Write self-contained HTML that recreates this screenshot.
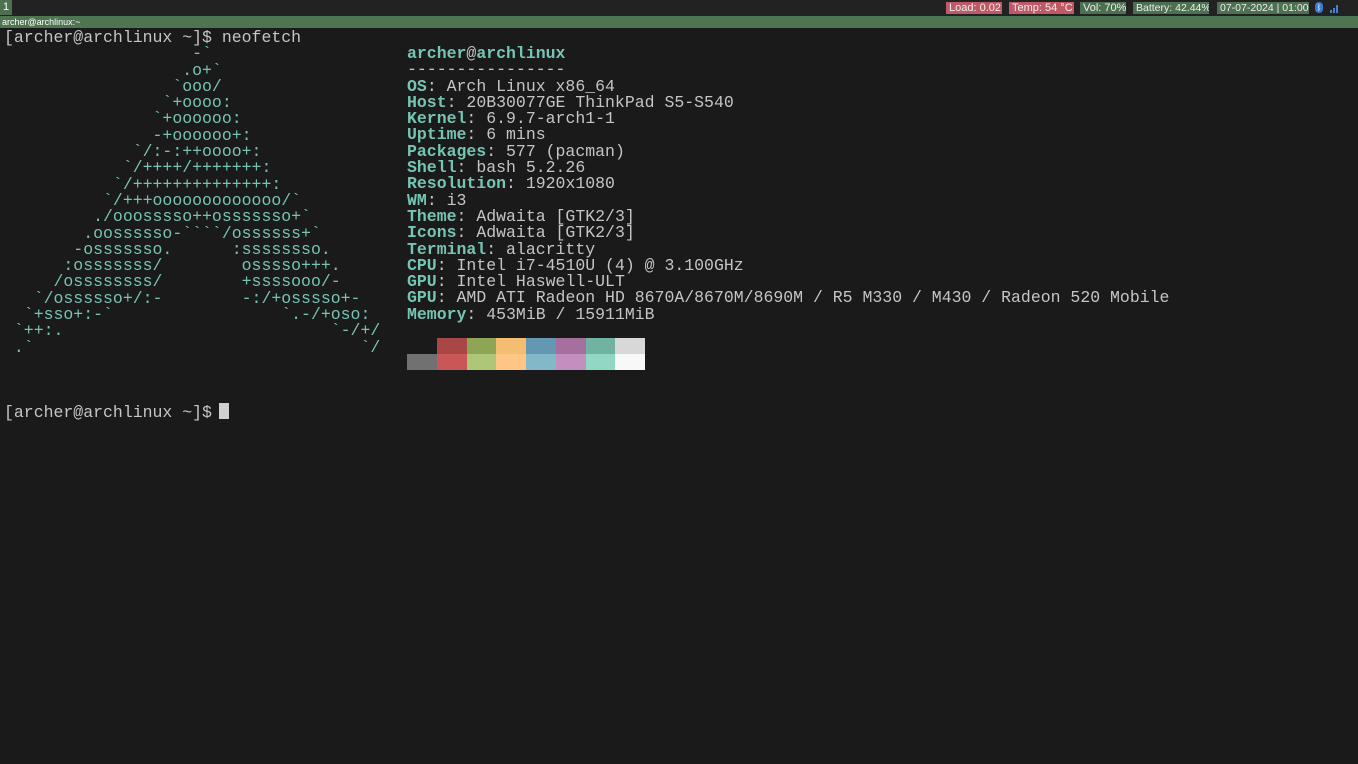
<!DOCTYPE html>
<html><head><meta charset="utf-8"><style>
html,body{margin:0;padding:0;background:#1a1a1a;width:1358px;height:764px;overflow:hidden;font-family:"Liberation Sans",sans-serif}
#top{position:absolute;left:0;top:0;width:1358px;height:16px;background:#222}
#ws{position:absolute;left:0;top:0;width:12px;height:15px;background:#4c7050;color:#fff;font-size:11px;line-height:15px;text-align:center}
.st{position:absolute;top:2px;height:12px;font-size:11px;line-height:12px;color:#f0f0f0;padding:0 3px;box-sizing:border-box;white-space:nowrap;overflow:hidden}
.r{background:#c05966}.g{background:#4c7050}
#title{position:absolute;left:0;top:16px;width:1358px;height:12px;background:#4f7452;color:#fff;font-size:9px;line-height:12px;padding-left:2px}
pre{margin:0;position:absolute;font-family:"Liberation Mono",monospace;font-size:16.5px;line-height:16.3px;color:#c5c5c5}
.c{color:#76c4b4}.b{color:#76c4b4;font-weight:bold}
.blk{position:absolute;width:29.7px;height:16px}
</style></head><body>
<div id="top"><div id="ws">1</div>
<div class="st r" style="left:946px;width:56px">Load: 0.02</div>
<div class="st r" style="left:1009px;width:65px">Temp: 54 °C</div>
<div class="st g" style="left:1080px;width:46px">Vol: 70%</div>
<div class="st g" style="left:1133px;width:76px;font-size:10.5px">Battery: 42.44%</div>
<div class="st g" style="left:1217px;width:92px;font-size:10.5px">07-07-2024 | 01:00</div>
<div style="position:absolute;left:1315px;top:2px;width:8px;height:11px;border-radius:4px;background:#3a7bd5;color:#fff;font-size:8px;line-height:11px;text-align:center">ᛒ</div>
<svg style="position:absolute;left:1330px;top:3px" width="10" height="10"><rect x="0" y="7" width="2" height="3" fill="#4a7fd0"/><rect x="3" y="5" width="2" height="5" fill="#4a7fd0"/><rect x="6" y="2" width="2" height="8" fill="#4a7fd0"/></svg>
</div>
<div id="title">archer@archlinux:~</div>
<pre style="left:4px;top:30px">[archer@archlinux ~]$ neofetch
<span class="c">                   -&#96;
                  .o+&#96;
                 &#96;ooo/
                &#96;+oooo:
               &#96;+oooooo:
               -+oooooo+:
             &#96;/:-:++oooo+:
            &#96;/++++/+++++++:
           &#96;/++++++++++++++:
          &#96;/+++ooooooooooooo/&#96;
         ./ooosssso++osssssso+&#96;
        .oossssso-&#96;&#96;&#96;&#96;/ossssss+&#96;
       -osssssso.      :ssssssso.
      :osssssss/        osssso+++.
     /ossssssss/        +ssssooo/-
   &#96;/ossssso+/:-        -:/+osssso+-
  &#96;+sso+:-&#96;                 &#96;.-/+oso:
 &#96;++:.                           &#96;-/+/
 .&#96;                                 &#96;/</span>



[archer@archlinux ~]$ </pre>
<pre style="left:407px;top:46px"><span class="b">archer</span>@<span class="b">archlinux</span>
----------------
<span class="b">OS</span>: Arch Linux x86_64
<span class="b">Host</span>: 20B30077GE ThinkPad S5-S540
<span class="b">Kernel</span>: 6.9.7-arch1-1
<span class="b">Uptime</span>: 6 mins
<span class="b">Packages</span>: 577 (pacman)
<span class="b">Shell</span>: bash 5.2.26
<span class="b">Resolution</span>: 1920x1080
<span class="b">WM</span>: i3
<span class="b">Theme</span>: Adwaita [GTK2/3]
<span class="b">Icons</span>: Adwaita [GTK2/3]
<span class="b">Terminal</span>: alacritty
<span class="b">CPU</span>: Intel i7-4510U (4) @ 3.100GHz
<span class="b">GPU</span>: Intel Haswell-ULT
<span class="b">GPU</span>: AMD ATI Radeon HD 8670A/8670M/8690M / R5 M330 / M430 / Radeon 520 Mobile
<span class="b">Memory</span>: 453MiB / 15911MiB</pre>
<div class="blk" style="left:437px;top:338px;background:#a94646"></div>
<div class="blk" style="left:467px;top:338px;background:#8fa556"></div>
<div class="blk" style="left:496px;top:338px;background:#f3bd72"></div>
<div class="blk" style="left:526px;top:338px;background:#6498b2"></div>
<div class="blk" style="left:556px;top:338px;background:#a76f9d"></div>
<div class="blk" style="left:586px;top:338px;background:#71b3a3"></div>
<div class="blk" style="left:615px;top:338px;background:#d8d8d8"></div>
<div class="blk" style="left:407px;top:354px;background:#717171"></div>
<div class="blk" style="left:437px;top:354px;background:#c95757"></div>
<div class="blk" style="left:467px;top:354px;background:#adc677"></div>
<div class="blk" style="left:496px;top:354px;background:#fec684"></div>
<div class="blk" style="left:526px;top:354px;background:#83b8c9"></div>
<div class="blk" style="left:556px;top:354px;background:#c28fbe"></div>
<div class="blk" style="left:586px;top:354px;background:#92d6c4"></div>
<div class="blk" style="left:615px;top:354px;background:#f8f8f8"></div>
<div style="position:absolute;left:219px;top:403px;width:10px;height:16px;background:#d0d0d0"></div>
</body></html>
